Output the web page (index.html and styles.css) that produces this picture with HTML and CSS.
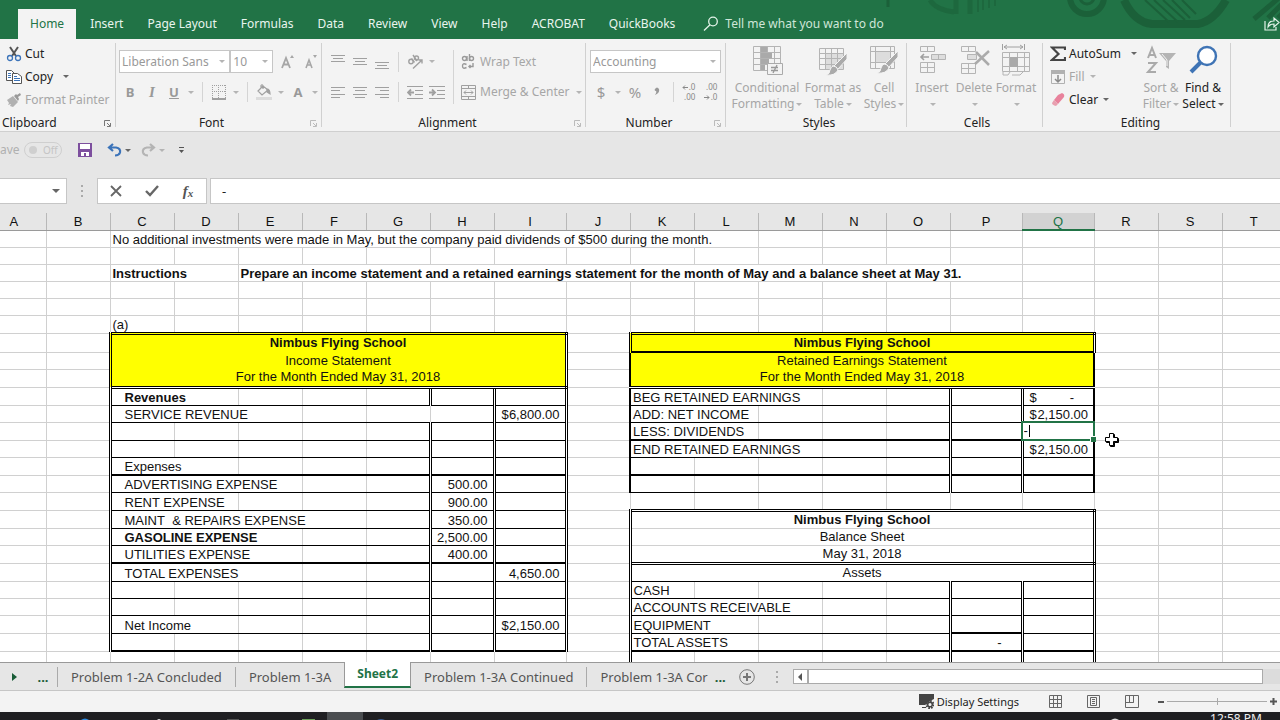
FILE: index.html
```html
<!DOCTYPE html>
<html lang="en">
<head>
<meta charset="utf-8">
<title>Nimbus Flying School - Excel</title>
<link rel="stylesheet" href="styles.css">
</head>
<body>
<header class="titlebar">
  <svg class="pattern" width="360" height="39" viewBox="0 0 360 39" fill="none" stroke="#1b6039" aria-hidden="true">
    <path d="M-32 0v7" stroke-width="3"/>
    <path d="M10 0q6 10 24 12M36 0v14M50 0v14" stroke-width="5" opacity=".6"/>
    <path d="M58 0v12M63 0v10M69 0v8M75 0v6" stroke-width="2" opacity=".6"/>
    <circle cx="167" cy="-3" r="17" stroke-width="6"/>
    <circle cx="167" cy="-3" r="7" stroke-width="3"/>
    <path d="M204 0q10 22 28 24h46q16-3 28-24" stroke-width="8"/>
    <path d="M225 0l24 22M234 0l24 22M243 0l22 20M252 0l18 18M262 0l14 14" stroke-width="2"/>
    <path d="M334 19l26-22M348 18l14-14M358 18l6-6" stroke-width="5"/>
  </svg>
  <nav class="tabs">
    <button class="tab on">Home</button><button class="tab">Insert</button><button class="tab">Page Layout</button><button class="tab">Formulas</button><button class="tab">Data</button><button class="tab">Review</button><button class="tab">View</button><button class="tab">Help</button><button class="tab">ACROBAT</button><button class="tab">QuickBooks</button>
    <button class="tell"><svg width="16" height="16" viewBox="0 0 16 16" fill="none" stroke="#e3f3e9" stroke-width="1.3"><circle cx="10" cy="5.500" r="4.300"/><path d="M7 8.700L1 14.500"/></svg>Tell me what you want to do</button>
  </nav>
  <button class="share" aria-label="Share"><svg width="16" height="16" viewBox="0 0 16 16" fill="none" stroke="#e3f3e9" stroke-width="1.2"><path d="M1 5v9h11v-3M4 11q0-6 6-6V2l5 4.500-5 4.500V8q-4 0-6 3z"/></svg></button>
</header>

<section class="ribbon">
  <div class="group clip">
    <div class="rows">
      <button class="cmd"><svg width="16" height="16" viewBox="0 0 16 16" fill="none"><path d="M4 1l6 9M12 1L6 10" stroke="#555" stroke-width="2"/><circle cx="4" cy="12" r="2.500" stroke="#3b73b9" stroke-width="1.300"/><circle cx="12" cy="12" r="2.500" stroke="#3b73b9" stroke-width="1.300"/></svg>Cut</button>
      <button class="cmd"><svg width="16" height="16" viewBox="0 0 16 16" fill="#fff" stroke="#555"><path d="M.5 1.500h5l3 3v7h-8z"/><path d="M6.500 4.500h5l4 3v7h-9z"/><path d="M2 4.500h3M2 6.500h3M2 8.500h3M8 7.500h3M8 9.500h6M8 11.500h6" stroke="#3b73b9"/></svg>Copy<i class="caret far"></i></button>
      <button class="cmd off"><svg width="16" height="16" viewBox="0 0 16 16" fill="#b1b1b1"><path d="M1 8l6-4 5 6-5 5-3-1 1-2-3 1 1-2z"/><path d="M8 4l2-2 1 1 3-2 1 2-3 2 1 2-1 2z" fill="#9a9a9a"/></svg>Format Painter</button>
    </div>
    <div class="name">Clipboard<svg class="launch" width="7" height="7" viewBox="0 0 7 7" fill="none" stroke="#777"><path d="M.5 6V.500H6M3 3l3 3M6.500 3v3.500H3"/></svg></div>
  </div>

  <div class="group font off">
    <div class="line one">
      <span class="pick face"><select aria-label="Font"><option>Liberation Sans</option></select></span><span class="pick size"><select aria-label="Font size"><option>10</option></select></span>
      <button class="ic w24" aria-label="Increase font size"><svg width="14" height="16" viewBox="0 0 14 16" fill="none" stroke="#a6a6a6" stroke-width="1.800"><path d="M1 14L5 4l4 10M2.500 10.500h5"/><path d="M9 4l2-3 2 3z" fill="#a6a6a6" stroke="none"/></svg></button><button class="ic w24" aria-label="Decrease font size"><svg width="14" height="16" viewBox="0 0 14 16" fill="none" stroke="#a6a6a6" stroke-width="1.600"><path d="M2 14l3-8 3 8M3 11h4"/><path d="M9 1h4l-2 3z" fill="#a6a6a6" stroke="none"/></svg></button>
    </div>
    <div class="line">
      <button class="ic w22"><b>B</b></button><button class="ic w22"><em>I</em></button><button class="ic w22"><u>U</u></button><button class="ic w12" aria-label="Underline styles"><i class="caret"></i></button><span class="bar"></span>
      <button class="ic w22" aria-label="Borders"><svg width="14" height="15" viewBox="0 0 14 15" stroke="#a0a0a0"><path d="M0 .5h14M0 6.500h14M.5 0v13M6.500 0v13M13.500 0v13" stroke-dasharray="1 1"/><path d="M0 14h14" stroke-width="2"/></svg></button><button class="ic w12" aria-label="Border styles"><i class="caret"></i></button><span class="bar"></span>
      <button class="ic w22" aria-label="Fill color"><svg width="16" height="16" viewBox="0 0 16 16" fill="none" stroke="#a0a0a0" stroke-width="1.200"><path d="M7 2L2 7l4 4 6-5zM5 5V1.500q1-1.500 2 0V5"/><path d="M11 5q3 0 3 5l-3-2z" fill="#a0a0a0"/><path d="M0 14.500h16" stroke="#dcdcdc" stroke-width="3"/></svg></button><button class="ic w12" aria-label="Fill colors"><i class="caret"></i></button>
      <button class="ic w22"><b>A</b></button><button class="ic w12" aria-label="Font colors"><i class="caret"></i></button>
    </div>
    <div class="name">Font<svg class="launch" width="7" height="7" viewBox="0 0 7 7" fill="none" stroke="#bbb"><path d="M.5 6V.500H6M3 3l3 3M6.500 3v3.500H3"/></svg></div>
  </div>

  <div class="group align off">
    <div class="two">
      <div class="stack">
        <div class="line one">
          <button class="ic w22" aria-label="Top align"><svg width="14" height="14" viewBox="0 0 14 14" stroke="#a0a0a0"><path d="M0 .5h14M2 3.500h10M0 6.500h14"/></svg></button><button class="ic w22" aria-label="Middle align"><svg width="14" height="14" viewBox="0 0 14 14" stroke="#a0a0a0"><path d="M0 3.500h14M2 6.500h10M0 9.500h14"/></svg></button><button class="ic w22" aria-label="Bottom align"><svg width="14" height="14" viewBox="0 0 14 14" stroke="#a0a0a0"><path d="M0 7.500h14M2 10.500h10M0 13.500h14"/></svg></button><span class="bar"></span>
          <button class="ic w22" aria-label="Orientation"><svg width="17" height="16" viewBox="0 0 17 16" fill="none" stroke="#a0a0a0" stroke-width="1.400"><circle cx="4" cy="7.500" r="2.200"/><path d="M4.500 4.500l3 4M6 1l4 6"/><circle cx="9.500" cy="4" r="2"/><path d="M6 14.500L15 6M15 9.500V6h-3.500"/></svg></button><button class="ic w12" aria-label="Orientation options"><i class="caret"></i></button>
        </div>
        <div class="line">
          <button class="ic w22" aria-label="Align left"><svg width="14" height="11" viewBox="0 0 14 11" stroke="#a0a0a0"><path d="M0 .5h14M0 3.500h9M0 7.500h14M0 10.500h9"/></svg></button><button class="ic w22" aria-label="Center"><svg width="14" height="11" viewBox="0 0 14 11" stroke="#a0a0a0"><path d="M0 .5h14M2 3.500h10M0 7.500h14M2 10.500h10"/></svg></button><button class="ic w22" aria-label="Align right"><svg width="14" height="11" viewBox="0 0 14 11" stroke="#a0a0a0"><path d="M0 .5h14M5 3.500h9M0 7.500h14M5 10.500h9"/></svg></button><span class="bar"></span>
          <button class="ic w22" aria-label="Decrease indent"><svg width="16" height="13" viewBox="0 0 16 13" fill="none" stroke="#a0a0a0"><path d="M0 .5h16M8 4.500h8M8 8.500h8M0 12.500h16"/><path d="M7 6.500H1M4 3.500l-3 3 3 3" stroke-width="1.800"/></svg></button><button class="ic w22" aria-label="Increase indent"><svg width="16" height="13" viewBox="0 0 16 13" fill="none" stroke="#a0a0a0"><path d="M0 .5h16M8 4.500h8M8 8.500h8M0 12.500h16"/><path d="M0 6.500h6M3 3.500l3 3-3 3" stroke-width="1.800"/></svg></button>
        </div>
      </div>
      <span class="bar tall"></span>
      <div class="stack">
        <button class="line one word"><svg width="15" height="16" viewBox="0 0 15 16" fill="none" stroke="#999" stroke-width="1.400"><circle cx="3.500" cy="4.500" r="2"/><path d="M6 2v5M8.500 0v7M5.500 10.500q-4-2-4 1.500t4 1.500M12 9v3.500H8M9.500 11L8 12.500 9.500 14"/><circle cx="10.500" cy="4.500" r="2"/></svg>Wrap Text</button>
        <button class="line word"><svg width="15" height="15" viewBox="0 0 15 15" fill="none" stroke="#a0a0a0"><path d="M.5.500h14v14H.500zM.500 3.500h14M.500 11.500h14M7.500 0v3.500M7.500 11.500V15M3 7.500h9M5 5.500l-2 2 2 2M10 5.500l2 2-2 2"/></svg>Merge &amp; Center<i class="caret"></i></button>
      </div>
    </div>
    <div class="name">Alignment<svg class="launch" width="7" height="7" viewBox="0 0 7 7" fill="none" stroke="#bbb"><path d="M.5 6V.500H6M3 3l3 3M6.500 3v3.500H3"/></svg></div>
  </div>

  <div class="group number off">
    <div class="line one"><span class="pick format"><select aria-label="Number format"><option>Accounting</option></select></span></div>
    <div class="line">
      <button class="ic w22 sym">$</button><button class="ic w12" aria-label="Currency formats"><i class="caret"></i></button><button class="ic w22 sym">%</button><button class="ic w22" aria-label="Comma style"><svg width="6" height="10" viewBox="0 0 6 10" fill="#999"><path d="M1 2q2-3 4 0 1 4-4 6 2-3 1-4-2 0-1-2z"/></svg></button><span class="bar"></span>
      <button class="ic w22 dec"><span><svg width="6" height="5" viewBox="0 0 6 5" fill="none" stroke="#888"><path d="M6 2.500H1M3 .5l-2 2 2 2"/></svg>.0</span><span>.00</span></button><button class="ic w22 dec"><span>.00</span><span><svg width="6" height="5" viewBox="0 0 6 5" fill="none" stroke="#888"><path d="M0 2.500h5M3 .5l2 2-2 2"/></svg>.0</span></button>
    </div>
    <div class="name">Number<svg class="launch" width="7" height="7" viewBox="0 0 7 7" fill="none" stroke="#bbb"><path d="M.5 6V.500H6M3 3l3 3M6.500 3v3.500H3"/></svg></div>
  </div>

  <div class="group styles off">
    <div class="bigs">
      <button class="big w72"><svg width="32" height="32" viewBox="0 0 32 32" fill="none" stroke="#b4b4b4"><path d="M2.500 2.500h27v24h-27zM2.500 8.500h27M2.500 14.500h27M2.500 20.500h27M9.500 2.500v24M16.500 2.500v24M23.500 2.500v24"/><path d="M10 3h6v5h-6zM10 9h11v5H10zM10 15h8v5h-8zM10 21h4v5h-4z" fill="#aaa" stroke="none"/><path d="M16.500 19.500h15v11h-15z" fill="#f3f3f3" stroke="#aaa"/><path d="M20 23.500h7M20 26.500h7M26 21l-4 8" stroke="#999" stroke-width="1.300"/></svg><span>Conditional</span><span>Formatting<i class="caret"></i></span></button>
      <button class="big w60"><svg width="32" height="32" viewBox="0 0 32 32" fill="none" stroke="#b4b4b4"><path d="M8 9h18v16H8z" fill="#ddd" stroke="none"/><path d="M2.500 4.500h24v21h-24zM2.500 9.500h24M2.500 14.500h24M2.500 20.500h24M8.500 4.500v21M14.500 4.500v21M20.500 4.500v21"/><path d="M30 9v6l-9 10-4-3z" fill="#aaa" stroke="#f3f3f3"/><path d="M16 22q4 0 5 4-3 6-12 5 4-1 4-5 1-3 3-4z" fill="#aaa" stroke="#f3f3f3"/></svg><span>Format as</span><span>Table<i class="caret"></i></span></button>
      <button class="big w42"><svg width="32" height="32" viewBox="0 0 32 32" fill="none" stroke="#b4b4b4"><path d="M7 8h15v10H7z" fill="#ddd" stroke="none"/><path d="M2.500 2.500h24v22h-24zM2.500 7.500h24M2.500 18.500h24M7.500 2.500v22M22.500 2.500v22"/><path d="M30 7v6l-9 10-4-3z" fill="#aaa" stroke="#f3f3f3"/><path d="M16 20q4 0 5 4-3 6-12 5 4-1 4-5 1-3 3-4z" fill="#aaa" stroke="#f3f3f3"/></svg><span>Cell</span><span>Styles<i class="caret"></i></span></button>
    </div>
    <div class="name">Styles</div>
  </div>

  <div class="group cells off">
    <div class="bigs">
      <button class="big w42"><svg width="32" height="32" viewBox="0 0 32 32" fill="none" stroke="#b4b4b4"><path d="M4.500 2.500h14v5h-14zM11.500 2.500v5M4.500 18.500h14v10h-14zM4.500 23.500h14M11.500 18.500v10"/><path d="M15.500 10.500h14v5h-14zM22.500 10.500v5" fill="#ddd"/><path d="M13 13H5M8 10l-3 3 3 3" stroke="#a0a0a0" stroke-width="1.600"/></svg><span>Insert</span><span><i class="caret"></i></span></button>
      <button class="big w42"><svg width="32" height="32" viewBox="0 0 32 32" fill="none" stroke="#b4b4b4"><path d="M3.500 2.500h14v5h-14zM10.500 2.500v5M3.500 19.500h14v10h-14zM3.500 24.500h14M10.500 19.500v10"/><path d="M9.500 10.500h9v5h-9z" fill="#ddd"/><path d="M18 8l13 13M31 7L17 20" stroke="#aaa" stroke-width="2.500"/></svg><span>Delete</span><span><i class="caret"></i></span></button>
      <button class="big w42"><svg width="32" height="32" viewBox="0 0 32 32" fill="none" stroke="#b4b4b4"><path d="M2.500 0v6M24.500 0v6M4 3h19M7 1L4 3l3 2M20 1l3 2-3 2" stroke="#a0a0a0"/><path d="M2.500 8.500h27v19h-27zM2.500 13.500h27M2.500 22.500h27M9.500 8.500v19M17.500 8.500v19M24.500 8.500v19M3 28v3h5l2-3M12 31h8l3-3"/><path d="M10 13h8v10h-8z" fill="#aaa" stroke="none"/></svg><span>Format</span><span><i class="caret"></i></span></button>
    </div>
    <div class="name">Cells</div>
  </div>

  <div class="group editing">
    <div class="bigs">
      <div class="rows">
        <button class="cmd"><svg width="16" height="16" viewBox="0 0 16 16" fill="none" stroke="#444" stroke-width="2.200"><path d="M15 4V1.500H2L8.500 8 2 14h13v-3"/></svg>AutoSum<i class="caret far"></i></button>
        <button class="cmd off"><svg width="16" height="16" viewBox="0 0 16 16" fill="none" stroke="#b1b1b1"><path d="M1.500 1.500h13v13h-13z"/><path d="M1 3h14" stroke-width="4"/><path d="M8 6v7M5 10l3 3 3-3" stroke="#8a8a8a" stroke-width="1.500"/></svg>Fill<i class="caret"></i></button>
        <button class="cmd"><svg width="16" height="16" viewBox="0 0 16 16"><path d="M8 3l4-2q3 1 2 4L8 12l-4-4z" fill="#e8829c"/><path d="M4 8l4 4-2 2q-4-1-4-3z" fill="#e8a0b0"/></svg>Clear<i class="caret"></i></button>
      </div>
      <button class="big w42 off"><svg width="32" height="32" viewBox="0 0 32 32" fill="none" stroke="#aaa" stroke-width="2"><path d="M3 14L7 4l4 10M4 11h6M3 19h8L3 28h8"/><path d="M14 9h17l-7 8v8l-3-2v-6z" fill="#b4b4b4" stroke="none"/><path d="M17 10l5 6v6" stroke="#f3f3f3" stroke-width="1"/></svg><span>Sort &amp;</span><span>Filter<i class="caret"></i></span></button>
      <button class="big w42"><svg width="32" height="32" viewBox="0 0 32 32" fill="#fff" stroke="#3f74b5"><path d="M14 18L4 28" stroke-width="4"/><circle cx="20" cy="12" r="9" stroke-width="2.400"/></svg><span>Find &amp;</span><span>Select<i class="caret"></i></span></button>
    </div>
    <div class="name">Editing</div>
  </div>
</section>

<section class="quick">
  <span class="faint">ave</span>
  <label class="switch"><input type="checkbox" aria-label="AutoSave"><span>Off</span></label>
  <button class="ic save" aria-label="Save"><svg width="14" height="14" viewBox="0 0 14 14"><path d="M0 0h14v14H0z" fill="#7d4f9e"/><path d="M2 1h10v5H2zM3 9h8v4H3z" fill="#fff"/><path d="M6 10h2v3H6z" fill="#7d4f9e"/></svg></button>
  <button class="ic" aria-label="Undo"><svg width="15" height="14" viewBox="0 0 15 14" fill="none" stroke="#3b73b9" stroke-width="2.200"><path d="M6 1L2 4.500 6 8M2 4.500h7q5 1 4 5-1 3-5 3"/></svg></button><button class="ic w12" aria-label="Undo list"><i class="caret"></i></button>
  <button class="ic off redo" aria-label="Redo"><svg width="15" height="14" viewBox="0 0 15 14" fill="none" stroke="#b4b4b4" stroke-width="2.200"><path d="M9 1l4 3.500L9 8M13 4.500H6q-5 1-4 5 1 3 5 3"/></svg></button><button class="ic w12 off" aria-label="Redo list"><i class="caret"></i></button>
  <button class="ic custom" aria-label="Customize toolbar"><svg width="5" height="6" viewBox="0 0 5 6" fill="#555"><path d="M0 0h5v1H0zM0 3h5L2.500 6z"/></svg></button>
</section>

<section class="formula">
  <span class="namebox"><input aria-label="Name box"></span>
  <svg class="grip" width="3" height="14" viewBox="0 0 3 14" fill="#aaa"><path d="M0 1h2v2H0zM0 6h2v2H0zM0 11h2v2H0z"/></svg>
  <div class="entry">
    <button aria-label="Cancel"><svg width="12" height="12" viewBox="0 0 12 12" stroke="#666" stroke-width="1.800"><path d="M1 1l10 10M11 1L1 11"/></svg></button>
    <button aria-label="Enter"><svg width="14" height="12" viewBox="0 0 14 12" fill="none" stroke="#666" stroke-width="2.400"><path d="M1 6l4 4 8-9"/></svg></button>
    <button class="fx" aria-label="Insert function">f<small>x</small></button>
  </div>
  <input class="fbar" aria-label="Formula bar" value="-">
</section>

<main class="sheet">
<table>
<colgroup><col><col><col><col><col><col><col><col><col class="wide"><col><col><col><col><col><col><col class="wide"><col class="wide"><col><col><col class="last"></colgroup>
<thead>
<tr><th>A<th>B<th>C<th>D<th>E<th>F<th>G<th>H<th>I<th>J<th>K<th>L<th>M<th>N<th>O<th>P<th class="cur">Q<th>R<th>S<th>T</tr>
</thead>
<tbody>
<tr><td><td><td colspan="10">No additional investments were made in May, but the company paid dividends of $500 during the month.<td><td><td><td><td><td><td><td></tr>
<tr><td><td><td><td><td><td><td><td><td><td><td><td><td><td><td><td><td><td><td><td></tr>
<tr><td><td><td colspan="2"><b>Instructions</b><td colspan="12"><b>Prepare an income statement and a retained earnings statement for the month of May and a balance sheet at May 31.</b><td><td><td><td></tr>
<tr><td><td><td><td><td><td><td><td><td><td><td><td><td><td><td><td><td><td><td><td></tr>
<tr><td><td><td><td><td><td><td><td><td><td><td><td><td><td><td><td><td><td><td><td></tr>
<tr class="t"><td><td><td>(a)<td><td><td><td><td><td><td><td><td><td><td><td><td><td><td><td><td></tr>
<tr class="x"><td><td class="d"><td class="ti yel top d" colspan="7"><b>Nimbus Flying School</b><td class="d"><td class="ti yel top um d" colspan="7"><b>Nimbus Flying School</b><td><td><td></tr>
<tr><td><td class="d"><td class="ti yel d" colspan="7">Income Statement<td class="m"><td class="ti yel m" colspan="7">Retained Earnings Statement<td><td><td></tr>
<tr class="t"><td><td class="d"><td class="ti yel ud d" colspan="7">For the Month Ended May 31, 2018<td class="m"><td class="ti yel ud m" colspan="7">For the Month Ended May 31, 2018<td><td><td></tr>
<tr class="t"><td><td class="d"><td class="in u" colspan="2"><b>Revenues</b><td class="u"><td class="u"><td class="u d"><td class="u d"><td class="u d"><td class="m"><td class="u" colspan="3">BEG RETAINED EARNINGS<td class="u"><td class="u d"><td class="u d"><td class="u m"><div class="money nil"><span>$</span><span>-</span></div><td><td><td></tr>
<tr><td><td class="d"><td class="in u" colspan="3">SERVICE REVENUE<td class="u"><td class="u"><td class="u d"><td class="u d"><div class="money"><span>$</span><span>6,800.00</span></div><td class="m"><td class="u" colspan="2">ADD: NET INCOME<td class="u"><td class="u"><td class="u d"><td class="u d"><td class="u m"><div class="money"><span>$</span><span>2,150.00</span></div><td><td><td></tr>
<tr class="t"><td><td class="d"><td class="u"><td class="u"><td class="u"><td class="u"><td class="u d"><td class="u d"><td class="u d"><td class="m"><td class="um" colspan="2">LESS: DIVIDENDS<td class="um"><td class="um"><td class="um d"><td class="um d"><td class="um m edit"><div class="active"><input aria-label="Cell Q" value="-"></div><td><td><td></tr>
<tr><td><td class="d"><td class="u"><td class="u"><td class="u"><td class="u"><td class="u d"><td class="u d"><td class="u d"><td class="m"><td class="u" colspan="3">END RETAINED EARNINGS<td class="u"><td class="u d"><td class="u d"><td class="u m"><div class="money"><span>$</span><span>2,150.00</span></div><td><td><td></tr>
<tr class="t"><td><td class="d"><td class="in um" colspan="2">Expenses<td class="um"><td class="um"><td class="um d"><td class="um d"><td class="um d"><td class="m"><td class="um"><td class="um"><td class="um"><td class="um"><td class="um d"><td class="um d"><td class="um m"><td><td><td></tr>
<tr><td><td class="d"><td class="in u" colspan="3">ADVERTISING EXPENSE<td class="u"><td class="u d"><td class="num u d">500.00<td class="u d"><td class="m"><td class="u"><td class="u"><td class="u"><td class="u"><td class="u d"><td class="u d"><td class="u m"><td><td><td></tr>
<tr class="t"><td><td class="d"><td class="in u" colspan="2">RENT EXPENSE<td class="u"><td class="u"><td class="u d"><td class="num u d">900.00<td class="u d"><td><td><td><td><td><td><td><td><td><td><td></tr>
<tr class="t"><td><td class="d"><td class="in u" colspan="4">MAINT&nbsp; &amp; REPAIRS EXPENSE<td class="u d"><td class="num u d">350.00<td class="u d"><td class="d"><td class="ti top line-b d" colspan="7"><b>Nimbus Flying School</b><td><td><td></tr>
<tr><td><td class="d"><td class="in u" colspan="3"><b>GASOLINE EXPENSE</b><td class="u"><td class="u d"><td class="num u d">2,500.00<td class="u d"><td class="d"><td class="ti line-b d" colspan="7">Balance Sheet<td><td><td></tr>
<tr class="t"><td><td class="d"><td class="in um" colspan="3">UTILITIES EXPENSE<td class="um"><td class="um d"><td class="num um d">400.00<td class="um d"><td class="d"><td class="ti ud d" colspan="7">May 31, 2018<td><td><td></tr>
<tr class="t"><td><td class="d"><td class="in u" colspan="3">TOTAL EXPENSES<td class="u"><td class="u d"><td class="u d"><td class="num u d">4,650.00<td class="d"><td class="ti u d" colspan="7">Assets<td><td><td></tr>
<tr><td><td class="d"><td class="u"><td class="u"><td class="u"><td class="u"><td class="u d"><td class="u d"><td class="u d"><td class="d"><td class="u">CASH<td class="u"><td class="u"><td class="u"><td class="u d"><td class="u d"><td class="u d"><td><td><td></tr>
<tr><td><td class="d"><td class="u"><td class="u"><td class="u"><td class="u"><td class="u d"><td class="u d"><td class="u d"><td class="d"><td class="u" colspan="3">ACCOUNTS RECEIVABLE<td class="u"><td class="u d"><td class="u d"><td class="u d"><td><td><td></tr>
<tr class="t"><td><td class="d"><td class="in u" colspan="2">Net Income<td class="u"><td class="u"><td class="u d"><td class="u d"><td class="u d"><div class="money"><span>$</span><span>2,150.00</span></div><td class="d"><td class="u" colspan="2">EQUIPMENT<td class="u"><td class="u"><td class="u d"><td class="um d"><td class="u d"><td><td><td></tr>
<tr class="t"><td><td class="d"><td class="um"><td class="um"><td class="um"><td class="um"><td class="um d"><td class="um d"><td class="um d"><td class="d"><td class="um" colspan="2">TOTAL ASSETS<td class="um"><td class="um"><td class="um d"><td class="um d"><div class="money nil"><span></span><span>-</span></div><td class="um d"><td><td><td></tr>
<tr><td><td><td><td><td><td><td><td><td><td class="d"><td><td><td><td><td class="d"><td class="d"><td class="d"><td><td><td></tr>
</tbody>
</table>
<svg class="pointer" width="16" height="16" viewBox="0 0 16 16" fill="#fff" stroke="#000"><path d="M6.500 2.500h4v4h4v4h-4v4h-4v-4h-4v-4h4z" fill="#000"/><path d="M5.500 1.500h4v4h4v4h-4v4h-4v-4h-4v-4h4z"/></svg>
</main>

<nav class="books">
  <button class="next" aria-label="Next sheets"><svg width="5" height="8" viewBox="0 0 5 8" fill="#185c37"><path d="M0 0l5 4-5 4z"/></svg></button>
  <button class="more">...</button>
  <button class="book edge">Problem 1-2A Concluded</button>
  <button class="book edge">Problem 1-3A</button>
  <button class="book live">Sheet2</button>
  <button class="book">Problem 1-3A Continued</button>
  <button class="book edge cut">Problem 1-3A Cor</button>
  <button class="more tail">...</button>
  <button class="add" aria-label="New sheet"><svg width="16" height="16" viewBox="0 0 16 16" fill="none" stroke="#777"><circle cx="8" cy="8" r="7.300"/><path d="M8 4v8M4 8h8" stroke-width="2"/></svg></button>
  <svg class="grip" width="3" height="14" viewBox="0 0 3 14" fill="#aaa"><path d="M0 1h2v2H0zM0 6h2v2H0zM0 11h2v2H0z"/></svg>
  <div class="scroll"><button aria-label="Scroll left"><svg width="4" height="8" viewBox="0 0 4 8" fill="#555"><path d="M4 0L0 4l4 4z"/></svg></button><div class="thumb"></div></div>
</nav>

<footer class="status">
  <button class="disp"><svg width="15" height="15" viewBox="0 0 15 15" fill="#444"><path d="M0 0h15v5l-4 2-5 4H0zM3 13h4v1H3z"/><circle cx="11" cy="10.500" r="3.500" fill="none" stroke="#444" stroke-width="2" stroke-dasharray="1.700 1"/><circle cx="11" cy="10.500" r="2.300" fill="none" stroke="#444" stroke-width="1.500"/></svg>Display Settings</button>
  <button class="view" aria-label="Normal"><svg width="13" height="13" viewBox="0 0 13 13" fill="none" stroke="#666"><path d="M.5.500h12v12H.500zM.500 4.500h12M.500 8.500h12M4.500 0v13M8.500 0v13"/></svg></button>
  <button class="view" aria-label="Page layout"><svg width="13" height="13" viewBox="0 0 13 13" fill="none" stroke="#666"><path d="M.5.500h12v12H.500zM3.500 2.500h6v8h-6zM5 4.500h3M5 6.500h3M5 8.500h3"/></svg></button>
  <button class="view" aria-label="Page break preview"><svg width="14" height="13" viewBox="0 0 14 13" fill="none" stroke="#666"><path d="M.5.500h13v12H.500zM4.500 1v6.500h4V1M1 7.500h7.500"/></svg></button>
  <button class="zoomb" aria-label="Zoom out"><svg width="6" height="2"><path d="M0 0h6v2H0z" fill="#555"/></svg></button>
  <input class="zoom" type="range" aria-label="Zoom">
  <button class="zoomb" aria-label="Zoom in"><svg width="7" height="7"><path d="M0 3.500h7M3.500 0v7" stroke="#555" stroke-width="2"/></svg></button>
</footer>

<div class="taskbar">
  <svg width="400" height="8" viewBox="0 0 400 8"><path d="M327 0h36v8h-36z" fill="#4a4d50"/><path d="M81 8q4-3 8 0z" fill="#2f8be0"/><path d="M157 8q2-2 4 0z" fill="#ddd"/><path d="M302 7h13v1h-13z" fill="#6da05a"/><path d="M227 7h12v1h-12z" fill="#555"/><path d="M377 8q4-2 8 0z" fill="#3b5e92"/></svg>
  <svg class="dot" width="10" height="8"><path d="M1 8q4-3 8 0z" fill="#ddd"/></svg>
  <time>12:58 PM</time>
</div>
</body>
</html>
```
FILE: styles.css
```css
* { box-sizing: border-box; }
body {
  margin: 0;
  height: 100vh;
  overflow: hidden;
  display: flex;
  flex-direction: column;
  background: #e6e6e6;
  color: #222;
  font: 12px/16px "Noto Sans", "Open Sans", sans-serif;
}
button, input, select {
  font: inherit;
  color: inherit;
  border: 0;
  padding: 0;
  margin: 0;
  background: none;
  outline: 0;
  white-space: nowrap;
}
svg { flex: none; display: block; }

/* Title bar and ribbon tabs */
.titlebar {
  position: relative;
  flex: none;
  display: flex;
  justify-content: space-between;
  align-items: flex-end;
  height: 39px;
  background: #217346;
  color: #e9f5ee;
}
.pattern { position: absolute; right: 0; top: 0; width: 360px; height: 39px; overflow: visible; }
.titlebar { overflow: hidden; }
.tabs { position: relative; display: flex; padding-left: 18px; height: 30px; }
.tab { padding: 0 12px; }
.tab.on { margin-right: 2px; background: #f3f3f3; color: #217346; }
.tell { display: flex; align-items: center; gap: 6px; padding-left: 16px; color: #cfe6d8; }
.share { position: relative; height: 30px; }

/* Ribbon */
.ribbon {
  flex: none;
  display: flex;
  height: 93px;
  padding-top: 3px;
  background: #f3f3f3;
  border-bottom: 1px solid #cfcfcf;
}
.group {
  display: flex;
  flex-direction: column;
  position: relative;
  flex: none;
}
.group::after {
  content: "";
  position: absolute;
  right: 0;
  top: 1px;
  bottom: 4px;
  width: 1px;
  background: #d0d0d0;
}
.clip { width: 116px; padding-left: 6px; }
.font { width: 206px; padding-left: 3px; }
.align { width: 264px; padding-left: 5px; }
.number { width: 140px; padding-left: 4px; }
.styles { width: 181px; padding-left: 5px; }
.cells { width: 136px; padding-left: 4px; }
.editing { width: 188px; padding-left: 7px; }
.off { color: #a6a6a6; }
.name { margin-top: auto; text-align: center; color: #222; position: relative; }
.clip .name { margin-left: -4px; padding-right: 64px; }
.launch { position: absolute; right: 5px; top: 5px; }
.rows { display: flex; flex-direction: column; }
.cmd { height: 23px; display: flex; align-items: center; gap: 3px; }
.caret {
  display: inline-block;
  border: 3px solid transparent;
  border-top-color: #666;
  border-bottom: 0;
  margin-left: 2px;
  vertical-align: middle;
  flex: none;
}
.caret.far { margin-left: 7px; }
.off .caret, .off.caret { border-top-color: #b4b4b4; }
.line { display: flex; align-items: center; height: 34px; }
.line.one { height: 33px; padding-top: 6px; }
.ic { display: flex; align-items: center; justify-content: center; height: 22px; flex: none; font-size: 13px; }
.ic .caret { margin: 0; }
.ic b, .ic em, .ic u { font-weight: 700; font-size: 13px; color: #999; }
.ic em { font-family: "Liberation Serif", serif; font-size: 15px; }
.w12 { width: 12px; }
.w22 { width: 22px; }
.w24 { width: 23px; }
.bar { width: 1px; height: 20px; margin: 0 5px; background: #d4d4d4; flex: none; }
.bar.tall { height: 54px; margin: 8px 7px 0 5px; }
.two { display: flex; }
.word { gap: 4px; }
.pick { position: relative; display: flex; height: 23px; background: #fff; border: 1px solid #c6c6c6; }
.pick select { appearance: none; flex: 1; width: 100%; padding: 0 2px; border-radius: 0; color: #999; opacity: 1; }
.pick::after {
  content: "";
  position: absolute;
  right: 4px;
  top: 9px;
  border: 3px solid transparent;
  border-top-color: #b4b4b4;
  border-bottom: 0;
}
.face { width: 112px; }
.size { width: 43px; margin-right: 3px; }
.format { width: 131px; }
.sym { font-size: 15px; color: #999; }
.ic.dec { display: grid; font-size: 8px; line-height: 10px; color: #888; align-content: center; justify-items: end; padding-right: 3px; }
.dec span { display: flex; align-items: center; gap: 1px; }
.bigs { display: flex; }
.big { display: flex; flex-direction: column; align-items: center; padding-top: 2px; }
.big svg { margin-bottom: 4px; }
.big span { height: 16px; }
.w72 { width: 72px; }
.w60 { width: 60px; }
.w42 { width: 42px; }
.editing .rows { width: 90px; }
.font .name, .align .name, .number .name { padding-right: 18px; }

/* Quick access toolbar */
.quick { flex: none; display: flex; align-items: center; height: 38px; padding-bottom: 2px; }
.faint { color: #b0b0b0; width: 24px; }
.switch { position: relative; width: 38px; height: 16px; border: 1px solid #cfcfcf; border-radius: 8px; color: #c4c4c4; font-size: 10px; line-height: 14px; padding-left: 18px; }
.switch input { appearance: none; position: absolute; left: 4px; top: 3px; width: 8px; height: 8px; border-radius: 4px; background: #cfcfcf; }
.save { width: 45px; }
.redo { margin-left: 7px; }
.custom { width: 26px; }

/* Formula bar */
.formula { flex: none; display: flex; align-items: center; height: 43px; padding-bottom: 1px; }
.namebox { position: relative; width: 67px; height: 26px; border: 1px solid #c6c6c6; border-left: 0; background: #fff; }
.namebox input { width: 48px; height: 24px; }
.namebox::after { content: ""; position: absolute; right: 6px; top: 10px; border: 4px solid transparent; border-top-color: #666; border-bottom: 0; }
.formula .grip { margin: 0 13px 0 14px; }
.entry { display: flex; width: 110px; height: 26px; border: 1px solid #c6c6c6; background: #fff; margin-right: 3px; }
.entry button { flex: 1; display: flex; align-items: center; justify-content: center; }
.fx { font: italic 700 15px/16px "Liberation Serif", serif; color: #555; }
.fx small { font-size: 11px; padding-top: 4px; }
.fbar { flex: 1; min-width: 0; height: 26px; border: 1px solid #c6c6c6; border-right: 0; background: #fff; padding: 0 11px; font-size: 13px; }

/* Worksheet */
.sheet {
  position: relative;
  flex: 1;
  min-height: 0;
  overflow: hidden;
  background: #fff;
  font: 13px/14px "Liberation Sans", Arial, sans-serif;
  color: #111;
}
table { border-collapse: collapse; table-layout: fixed; width: calc(100% + 24px); min-width: 1304px; margin-left: -18px; }
col { width: 64px; }
col.wide { width: 72px; }
col.last { width: auto; }
thead tr { height: 17px; }
th { padding: 1px 0 0; background: #e6e6e6; font-weight: 400; border-right: 1px solid #b8b8b8; border-bottom: 1px solid #9a9a9a; }
th.cur { background: #d2d2d2; color: #217346; border-bottom: 2px solid #217346; }
tr { height: 17px; }
tr.t { height: 18px; }
tr.x { height: 19px; }
td { padding: 0 2px; vertical-align: bottom; white-space: nowrap; border-right: 1px solid #d0d0d0; border-bottom: 1px solid #d0d0d0; }
.u { border-bottom: 1px solid #000; }
.um { border-bottom: 2px solid #000; }
.d { border-right: 3px double #000; }
.m { border-right: 2px solid #000; }
.in { padding-left: 13px; }
.num { text-align: right; padding-right: 5px; }
.ti { text-align: center; vertical-align: middle; border-bottom: 0; }
.ti.u { border-bottom: 1px solid #000; }
.ti.um { border-bottom: 2px solid #000; }
.ti.ud { border-bottom: 3px double #000; }
.ti.line-b { border-bottom: 1px solid #d0d0d0; }
.top { border-top: 3px double #000; }
.yel { background: #ff0; }
.money { display: flex; justify-content: space-between; padding: 0 3px 0 4px; }
.money.nil { padding-right: 17px; }
.edit { position: relative; }
.active { position: absolute; inset: -2px -2px -2px -3px; border: 2px solid #217346; background: #fff; }
.active input { display: block; width: 100%; height: 100%; padding-left: 1px; }
.active::before { content: ""; position: absolute; left: 6px; top: 2px; bottom: 2px; width: 1px; background: #000; }
.active::after { content: ""; position: absolute; right: -3px; bottom: -3px; width: 5px; height: 5px; background: #217346; border: solid #fff; border-width: 1px 0 0 1px; }
.pointer { position: absolute; left: 1104px; top: 219px; }

/* Sheet tabs */
.books { flex: none; display: flex; align-items: center; height: 29px; border-top: 1px solid #999; border-bottom: 1px solid #c6c6c6; font-size: 13px; color: #555; }
.next { width: 29px; display: flex; justify-content: center; }
.more { width: 28px; color: #185c37; font-weight: 700; }
.more.tail { width: 25px; }
.book { position: relative; height: 20px; line-height: 18px; padding: 0 13px; }
.book.edge { border-left: 1px solid #aaa; }
.book.live { height: 26px; line-height: 24px; align-self: flex-start; margin-top: -1px; background: #fff; color: #217346; font-weight: 700; font-size: 12px; padding: 0 12px; border: 1px solid #999; border-top: 0; border-bottom: 2px solid #217346; }
.book.cut { padding-right: 0; }
.add { margin: 0 21px 0 6px; }
.scroll { flex: 1; display: flex; height: 15px; background: #dcdcdc; margin-left: 14px; padding-right: 17px; }
.scroll button { width: 15px; border: 1px solid #aaa; background: #fff; display: flex; align-items: center; justify-content: center; }
.thumb { flex: 1; border: 1px solid #aaa; background: #fff; }

/* Status bar */
.status { flex: none; display: flex; align-items: center; justify-content: flex-end; height: 21px; background: #f3f3f3; }
.disp { display: flex; align-items: center; gap: 3px; margin-right: 30px; font-size: 11px; }
.view { margin-right: 25px; }
.view + .zoomb { margin-left: -10px; }
.zoomb { width: 13px; display: flex; justify-content: center; }
.zoom { appearance: none; width: 100px; height: 7px; background: linear-gradient(#aaa, #aaa) 0 3px / 100% 1px no-repeat, linear-gradient(#aaa, #aaa) 50% 0 / 1px 7px no-repeat; }
.zoom::-webkit-slider-thumb { appearance: none; width: 1px; height: 5px; }

.taskbar { flex: none; display: flex; height: 8px; overflow: hidden; background: #1f1f22; color: #eee; }
.dot { margin-left: auto; }
.taskbar time { margin: -1px 18px 0 90px; }
```
